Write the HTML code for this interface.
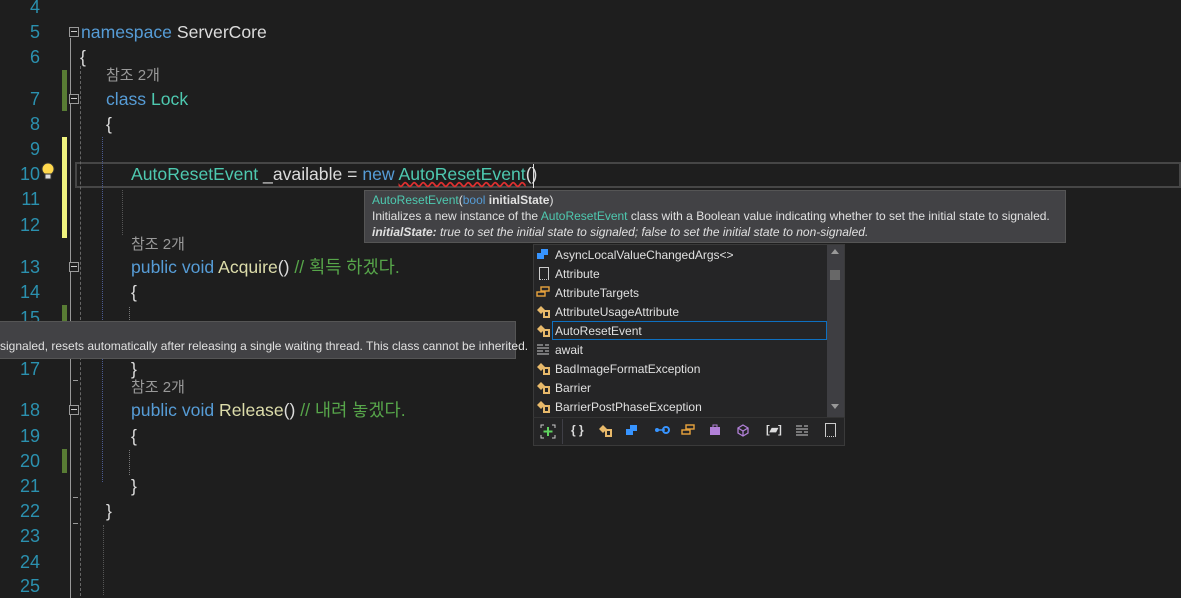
<!DOCTYPE html>
<html><head><meta charset="utf-8"><style>
*{margin:0;padding:0;box-sizing:border-box}
body{width:1181px;height:593px;background:#1e1e1e;overflow:hidden;position:relative;font-family:"Liberation Sans","Noto Sans CJK KR",sans-serif;color:#dcdcdc}
.a{position:absolute;white-space:pre}
.ln{position:absolute;width:40px;text-align:right;left:0;color:#2b91af;font-size:18px;line-height:20px}
.c{position:absolute;font-size:17.6px;line-height:20px;white-space:pre}
.cl{position:absolute;font-size:15px;color:#999;line-height:15px;white-space:pre}
.k{color:#569cd6}.t{color:#4ec9b0}.m{color:#dcdcaa}.cm{color:#57a64a}
.fold{position:absolute;left:69px;width:10px;height:10px;border:1px solid #999;background:#1e1e1e}
.fold:after{content:"";position:absolute;left:1px;top:3px;width:6px;height:1px;background:#ccc}
.vl{position:absolute;border-left:1px dashed #555;width:0}
.bar{position:absolute;left:62px;width:5px}
.it{position:absolute;left:555px;font-size:12px;color:#e0e0e0;line-height:16px}
.ic{position:absolute;left:537px;width:14px;height:12px}
</style></head><body>
<div class="a" style="left:75px;top:162px;width:1106px;height:26px;border:2px solid #464646"></div>
<div class="bar" style="top:70px;height:41px;background:#587c34"></div>
<div class="bar" style="top:137px;height:101px;background:#eff27e"></div>
<div class="bar" style="top:305px;height:17px;background:#587c34"></div>
<div class="bar" style="top:449px;height:24px;background:#587c34"></div>
<div class="a" style="left:70px;top:38px;width:1px;height:560px;background:#999"></div>
<div class="vl" style="left:80px;top:66px;height:530px;border-color:#666"></div>
<div class="vl" style="left:102px;top:137px;height:345px;border-left:1px dotted #4a5a90"></div>
<div class="vl" style="left:103px;top:525px;height:70px;border-left:1px dotted #555"></div>
<div class="vl" style="left:122px;top:190px;height:45px;border-left:1px dotted #555"></div>
<div class="vl" style="left:129px;top:307px;height:15px;border-left:1px dotted #777"></div>
<div class="vl" style="left:129px;top:450px;height:25px;border-left:1px dotted #777"></div>
<div class="a" style="left:73px;top:380px;width:5px;height:1px;background:#999"></div>
<div class="a" style="left:73px;top:497px;width:5px;height:1px;background:#999"></div>
<div class="a" style="left:73px;top:523px;width:5px;height:1px;background:#999"></div>
<div class="fold" style="top:27px"></div>
<div class="fold" style="top:94px"></div>
<div class="fold" style="top:262px"></div>
<div class="fold" style="top:405px"></div>
<div class="ln" style="top:-3px">4</div>
<div class="ln" style="top:22px">5</div>
<div class="ln" style="top:47px">6</div>
<div class="ln" style="top:89px">7</div>
<div class="ln" style="top:114px">8</div>
<div class="ln" style="top:139px">9</div>
<div class="ln" style="top:164px">10</div>
<div class="ln" style="top:189px">11</div>
<div class="ln" style="top:215px">12</div>
<div class="ln" style="top:257px">13</div>
<div class="ln" style="top:282px">14</div>
<div class="ln" style="top:308px">15</div>
<div class="ln" style="top:359px">17</div>
<div class="ln" style="top:400px">18</div>
<div class="ln" style="top:426px">19</div>
<div class="ln" style="top:451px">20</div>
<div class="ln" style="top:476px">21</div>
<div class="ln" style="top:501px">22</div>
<div class="ln" style="top:526px">23</div>
<div class="ln" style="top:552px">24</div>
<div class="ln" style="top:576px">25</div>
<svg class="a" style="left:40px;top:162px" width="16" height="20"><circle cx="8" cy="7" r="6" fill="#ffd84d" stroke="#333" stroke-width="1"/><rect x="5" y="12" width="6" height="5" fill="#ddd" stroke="#333"/></svg>
<div class="c" style="left:81px;top:22px"><span class="k">namespace</span> ServerCore</div>
<div class="c" style="left:80px;top:47px">{</div>
<div class="cl" style="left:106px;top:68px">참조 2개</div>
<div class="c" style="left:106px;top:89px"><span class="k">class</span> <span class="t">Lock</span></div>
<div class="c" style="left:106px;top:114px">{</div>
<div class="c" style="left:131px;top:164px"><span class="t">AutoResetEvent</span> _available = <span class="k">new</span> <span class="t" style="text-decoration:underline wavy #e03030">AutoResetEvent</span>()</div>
<div class="a" style="left:533px;top:164px;width:1px;height:24px;background:#ddd"></div>
<div class="cl" style="left:131px;top:237px">참조 2개</div>
<div class="c" style="left:131px;top:257px"><span class="k">public</span> <span class="k">void</span> <span class="m">Acquire</span>() <span class="cm">// 획득 하겠다.</span></div>
<div class="c" style="left:131px;top:282px">{</div>
<div class="c" style="left:131px;top:359px">}</div>
<div class="cl" style="left:131px;top:380px">참조 2개</div>
<div class="c" style="left:131px;top:400px"><span class="k">public</span> <span class="k">void</span> <span class="m">Release</span>() <span class="cm">// 내려 놓겠다.</span></div>
<div class="c" style="left:131px;top:426px">{</div>
<div class="c" style="left:131px;top:476px">}</div>
<div class="c" style="left:106px;top:501px">}</div>
<div class="a" style="left:-2px;top:321px;width:518px;height:38px;background:#424245;border:1px solid #555"></div>
<div class="a" style="left:0;top:339px;font-size:12px;color:#e0e0e0">signaled, resets automatically after releasing a single waiting thread. This class cannot be inherited.</div>
<div class="a" style="left:364px;top:190px;width:702px;height:53px;background:#424245;border:1px solid #555"></div>
<div class="a" style="left:372px;top:192px;font-size:12px;line-height:16px;color:#e0e0e0"><span class="t">AutoResetEvent</span>(<span class="k">bool</span> <b>initialState</b>)
Initializes a new instance of the <span class="t">AutoResetEvent</span> class with a Boolean value indicating whether to set the initial state to signaled.
<i><b>initialState:</b> true to set the initial state to signaled; false to set the initial state to non-signaled.</i></div>
<div class="a" style="left:533px;top:244px;width:312px;height:202px;background:#252526;border:1px solid #3a3a3a"></div>
<div class="a" style="left:827px;top:245px;width:17px;height:172px;background:#3e3e42"></div>
<div class="a" style="left:831px;top:249px;border:4px solid transparent;border-bottom:5px solid #999;border-top:0"></div>
<div class="a" style="left:830px;top:270px;width:10px;height:10px;background:#686868"></div>
<div class="a" style="left:831px;top:404px;border:4px solid transparent;border-top:5px solid #999;border-bottom:0"></div>
<div class="a" style="left:552px;top:321px;width:275px;height:19px;border:1px solid #0e70c0"></div>
<div class="it" style="top:247px">AsyncLocalValueChangedArgs&lt;&gt;</div>
<div class="it" style="top:266px">Attribute</div>
<div class="it" style="top:285px">AttributeTargets</div>
<div class="it" style="top:304px">AttributeUsageAttribute</div>
<div class="it" style="top:323px">AutoResetEvent</div>
<div class="it" style="top:342px">await</div>
<div class="it" style="top:361px">BadImageFormatException</div>
<div class="it" style="top:380px">Barrier</div>
<div class="it" style="top:399px">BarrierPostPhaseException</div>
<svg class="a" style="left:536px;top:248px" width="14" height="12"><rect x="5" y="1" width="7" height="6" fill="#3794ff"/><rect x="1" y="5" width="7" height="6" fill="#3794ff"/></svg>
<div class="ic" style="top:267px;width:10px;left:539px;height:13px;border:1px solid #ccc;border-bottom:1px dotted #ccc"></div>
<svg class="a" style="left:536px;top:286px" width="14" height="12"><rect x="5" y="1" width="8" height="4" fill="none" stroke="#e8a33d" stroke-width="1.4"/><rect x="1" y="6" width="8" height="4" fill="none" stroke="#e8a33d" stroke-width="1.4"/></svg>
<svg class="a" style="left:536px;top:305px" width="16" height="14"><path d="M1 5l4-4 4 4-4 4z" fill="#e8b96a"/><path d="M8 6h5v6h-5z" fill="none" stroke="#e8b96a" stroke-width="2"/></svg>
<svg class="a" style="left:536px;top:324px" width="16" height="14"><path d="M1 5l4-4 4 4-4 4z" fill="#e8b96a"/><path d="M8 6h5v6h-5z" fill="none" stroke="#e8b96a" stroke-width="2"/></svg>
<svg class="a" style="left:536px;top:343px" width="16" height="14"><path d="M1 2h6M1 5h12M1 8h6M1 11h12M9 2h4M9 8h4" stroke="#ccc" stroke-width="1"/></svg>
<svg class="a" style="left:536px;top:362px" width="16" height="14"><path d="M1 5l4-4 4 4-4 4z" fill="#e8b96a"/><path d="M8 6h5v6h-5z" fill="none" stroke="#e8b96a" stroke-width="2"/></svg>
<svg class="a" style="left:536px;top:381px" width="16" height="14"><path d="M1 5l4-4 4 4-4 4z" fill="#e8b96a"/><path d="M8 6h5v6h-5z" fill="none" stroke="#e8b96a" stroke-width="2"/></svg>
<svg class="a" style="left:536px;top:400px" width="16" height="14"><path d="M1 5l4-4 4 4-4 4z" fill="#e8b96a"/><path d="M8 6h5v6h-5z" fill="none" stroke="#e8b96a" stroke-width="2"/></svg>
<div class="a" style="left:533px;top:417px;width:312px;height:29px;background:#252526;border:1px solid #3a3a3a;border-top:1px solid #333"></div>
<div class="a" style="left:562px;top:419px;width:1px;height:25px;background:#3f3f46"></div>
<svg class="a" style="left:540px;top:424px" width="16" height="15"><path d="M1 4V1h3M12 1h3v3M15 11v3h-3M4 14H1v-3" stroke="#ccc" fill="none"/><path d="M8 3v9M3.5 7.5h9" stroke="#5fd35f" stroke-width="2"/></svg>
<div class="a" style="left:571px;top:423px;font-size:12px;color:#ddd;font-weight:bold">{ }</div>
<svg class="a" style="left:598px;top:424px" width="16" height="14"><path d="M1 5l4-4 4 4-4 4z" fill="#e8b96a"/><path d="M8 6h5v6h-5z" fill="none" stroke="#e8b96a" stroke-width="2"/></svg>
<svg class="a" style="left:625px;top:424px" width="14" height="12"><rect x="5" y="1" width="7" height="6" fill="#3794ff"/><rect x="1" y="5" width="7" height="6" fill="#3794ff"/></svg>
<svg class="a" style="left:654px;top:424px" width="16" height="12"><circle cx="3" cy="6" r="2" fill="#3794ff"/><path d="M3 6h8" stroke="#3794ff" stroke-width="1.5"/><circle cx="12" cy="6" r="3" fill="none" stroke="#3794ff" stroke-width="2"/></svg>
<svg class="a" style="left:681px;top:424px" width="14" height="12"><rect x="5" y="1" width="8" height="4" fill="none" stroke="#e8a33d" stroke-width="1.4"/><rect x="1" y="6" width="8" height="4" fill="none" stroke="#e8a33d" stroke-width="1.4"/></svg>
<svg class="a" style="left:709px;top:424px" width="12" height="12"><rect x="1" y="3" width="10" height="8" fill="#b180d7"/><rect x="4" y="1" width="4" height="3" fill="none" stroke="#b180d7"/></svg>
<svg class="a" style="left:737px;top:424px" width="12" height="13"><path d="M6 1l5 3v5l-5 3-5-3V4z M1 4l5 3 5-3 M6 7v5" fill="none" stroke="#b180d7" stroke-width="1.3"/></svg>
<div class="a" style="left:766px;top:423px;font-size:11px;color:#ddd;font-weight:bold">[▰]</div>
<svg class="a" style="left:795px;top:424px" width="16" height="14"><path d="M1 2h6M1 5h12M1 8h6M1 11h12M9 2h4M9 8h4" stroke="#ccc" stroke-width="1"/></svg>
<div class="a" style="left:825px;top:423px;width:11px;height:14px;border:1px solid #ccc;border-bottom:1px dotted #ccc"></div>
</body></html>
